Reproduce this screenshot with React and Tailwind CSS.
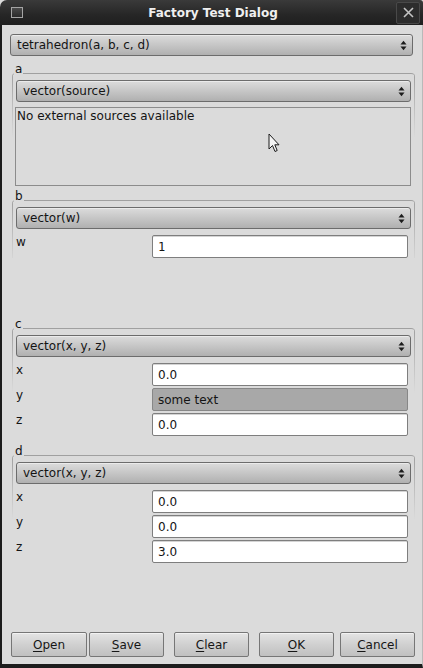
import React from 'react';
import clsx from 'clsx';

const ComboArrows = () => (
    <svg width="7" height="11" viewBox="0 0 7 11" className="shrink-0">
        <path d="M0.5 4.5 L3.5 0.8 L6.5 4.5 Z" fill="#1c1c1c" />
        <path d="M0.5 6.5 L3.5 10.2 L6.5 6.5 Z" fill="#1c1c1c" />
    </svg>
);

const Combo = ({ label, className }) => (
    <div
        className={clsx(
            'h-[22px] flex items-center justify-between pl-[6px] pr-[5px] border border-[#6c6c6c] rounded-[3px] bg-[linear-gradient(to_bottom,#dcdcdc,#c6c6c6_50%,#b0b0b0)] shadow-[inset_0_1px_0_#ebebeb]',
            className
        )}
    >
        <span className="leading-[14px]">{label}</span>
        <ComboArrows />
    </div>
);

const Group = ({ title, className, children }) => (
    <div className={clsx('ml-[2px]', className)}>
        <div className="relative z-10 ml-[2px] w-fit px-[1px] h-[12px] leading-[12px] bg-[#dbdbdb] -mb-[2px]">{title}</div>
        <div className="border-t border-[#a0a0a0] rounded-t-[4px] px-[4px] pt-[6px] bg-[image:linear-gradient(#a0a0a0,rgba(160,160,160,0)),linear-gradient(#a0a0a0,rgba(160,160,160,0))] bg-[length:1px_64px] bg-[position:left_top,right_top] bg-no-repeat">
            {children}
        </div>
    </div>
);

const Field = ({ name, value, mono, selected }) => (
    <div className="flex h-[23px]">
        <div className="w-[136px] leading-[14px]">{name}</div>
        <div
            className={clsx(
                'w-[256px] h-[23px] flex items-center pl-[5px] border rounded-[2px]',
                selected
                    ? 'bg-[#a8a8a8] border-[#878787]'
                    : 'bg-white border-[#7e7e7e] shadow-[inset_0_1px_0_#d4d4d4]',
                mono && "font-['DejaVu_Sans_Mono',monospace]"
            )}
        >
            {value}
        </div>
    </div>
);

const Button = ({ mnemonic, rest, className }) => (
    <button
        className={clsx(
            'h-[25px] flex items-center justify-center border border-[#767676] rounded-[2px] bg-[linear-gradient(to_bottom,#e4e4e4,#d0d0d0_50%,#c0c0c0)] shadow-[inset_0_1px_0_#f2f2f2] text-[#161616]',
            className
        )}
    >
        <span>
            <span className="underline underline-offset-[2px]">{mnemonic}</span>
            {rest}
        </span>
    </button>
);

export default function App() {
    return (
        <div className="w-[423px] h-[668px] flex flex-col bg-[#dbdbdb] font-['DejaVu_Sans',sans-serif] text-[12px] text-[#141414]">
            {/* title bar */}
            <div className="h-[25px] shrink-0 flex items-center rounded-tl-[7px] rounded-tr-[3px] bg-[linear-gradient(to_bottom,#3a3a3a,#262626_60%,#1f1f1f)]">
                <div className="ml-[11px] w-[12px] h-[11px] border border-[#a4a4a4] bg-[linear-gradient(to_bottom,#4a4a4a,#2a2a2a)]" />
                <div className="flex-1 pl-[7px] text-center font-bold text-[#efefef] leading-[14px]">Factory Test Dialog</div>
                <div className="mr-[3px] w-[24px] h-[22px] flex items-center justify-center border border-[#494949] rounded-[2px] bg-[#2c2c2c]">
                    <svg width="11" height="11" viewBox="0 0 11 11">
                        <path d="M1 1 L10 10 M10 1 L1 10" stroke="#c4c4c4" strokeWidth="1.6" />
                    </svg>
                </div>
            </div>

            {/* body */}
            <div className="flex-1 flex flex-col border-l-2 border-l-[#1c1c1c] border-r border-r-[#b9b9b9] border-b-4 border-b-[#1c1c1c] pl-[8px] pr-[7px] pt-[9px]">
                <Combo label="tetrahedron(a, b, c, d)" className="mr-[2px]" />

                <Group title="a" className="mt-[7px]">
                    <Combo label="vector(source)" />
                    <div className="relative mt-[5px] -ml-[1px] h-[79px] border border-[#8c8c8c] pl-[1px] pt-[1px] leading-[14px]">
                        No external sources available
                        <svg className="absolute left-[252px] top-[25px]" width="12" height="20" viewBox="0 0 12 20">
                            <path
                                d="M1 1 L1 16 L4.5 12.5 L7 18.5 L9.2 17.5 L6.8 11.8 L11 11.8 Z"
                                fill="#f4f4f4"
                                stroke="#1a1a1a"
                                strokeWidth="1"
                                strokeLinejoin="round"
                            />
                        </svg>
                    </div>
                </Group>

                <Group title="b" className="mt-[4px]">
                    <Combo label="vector(w)" />
                    <div className="mt-[6px]">
                        <Field name="w" value="1" mono />
                    </div>
                </Group>

                <Group title="c" className="mt-[60px]">
                    <Combo label="vector(x, y, z)" />
                    <div className="mt-[6px] flex flex-col gap-[2px]">
                        <Field name="x" value="0.0" />
                        <Field name="y" value="some text" selected />
                        <Field name="z" value="0.0" />
                    </div>
                </Group>

                <Group title="d" className="mt-[9px]">
                    <Combo label="vector(x, y, z)" />
                    <div className="mt-[6px] flex flex-col gap-[2px]">
                        <Field name="x" value="0.0" />
                        <Field name="y" value="0.0" />
                        <Field name="z" value="3.0" />
                    </div>
                </Group>

                {/* buttons */}
                <div className="mt-auto pb-[7px] flex">
                    <Button mnemonic="O" rest="pen" className="ml-[1px] w-[76px]" />
                    <Button mnemonic="S" rest="ave" className="ml-[2px] w-[75px]" />
                    <Button mnemonic="C" rest="lear" className="ml-[10px] w-[75px]" />
                    <Button mnemonic="O" rest="K" className="ml-[10px] w-[75px]" />
                    <Button mnemonic="C" rest="ancel" className="ml-[6px] w-[75px]" />
                </div>
            </div>
        </div>
    );
}
